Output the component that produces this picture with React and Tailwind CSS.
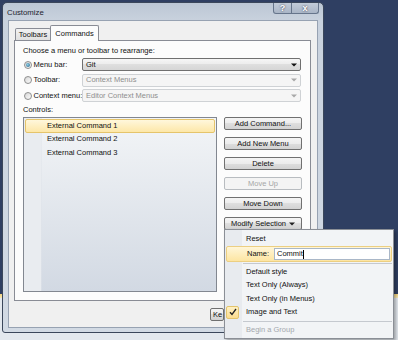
import React from 'react';

const btnBase =
  'h-[13px] flex items-center justify-center rounded-[2px] border';
const btnOn =
  'border-[#707070] bg-[linear-gradient(#f4f4f4_0%,#ececec_50%,#dedede_50%,#d2d2d2_100%)] text-[#111]';
const btnOff = 'border-[#b8bcc0] bg-[#f4f4f4] text-[#a6a6a6]';

const Button = ({ children, disabled, className = '' }) => (
  <div className={`${btnBase} ${disabled ? btnOff : btnOn} ${className}`}>{children}</div>
);

const Arrow = ({ color = '#000' }) => (
  <svg width="6" height="4" viewBox="0 0 6 4">
    <path d="M0 0.5 H6 L3 3.5 Z" fill={color} />
  </svg>
);

const Radio = ({ checked }) => (
  <div className="w-[8px] h-[8px] shrink-0 rounded-full border border-[#8e8f8f] bg-[linear-gradient(135deg,#d7d7d7,#fbfbfb)] flex items-center justify-center">
    {checked && (
      <div className="w-[4px] h-[4px] rounded-full bg-[radial-gradient(circle_at_40%_40%,#8fd0e6,#1f5c84)]" />
    )}
  </div>
);

const Select = ({ value, disabled }) => (
  <div
    className={`w-[219px] h-[13px] shrink-0 rounded-[2px] border flex items-center justify-between pl-[3px] pr-[3px] ${
      disabled
        ? 'border-[#cfd2d5] bg-[#f5f5f5] text-[#8e8e8e]'
        : 'border-[#707070] bg-[linear-gradient(#f6f6f6_0%,#ececec_50%,#dfdfdf_50%,#d6d6d6_100%)] text-[#111]'
    }`}
  >
    <span>{value}</span>
    <Arrow color={disabled ? '#a8a8a8' : '#111'} />
  </div>
);

const Row = ({ label, checked, value, disabled }) => (
  <div className="h-[13px] flex items-center pl-[9px]">
    <Radio checked={checked} />
    <span className="w-[50px] shrink-0 pl-[1.5px] whitespace-nowrap text-[#111]">{label}</span>
    <Select value={value} disabled={disabled} />
  </div>
);

const MenuItem = ({ children, disabled, checked, className = 'h-[13.5px]' }) => (
  <div className={`flex items-center ${className}`}>
    <div className="w-[18px] h-full flex items-center pl-[1px]">
      {checked && (
        <div className="w-[13px] h-[13px] rounded-[2px] border border-[#e3c46c] bg-[linear-gradient(#fff1c4,#fbdc8f)] flex items-center justify-center">
          <svg width="8" height="8" viewBox="0 0 8 8">
            <path d="M1 4.2 L3 6.5 L7 1" stroke="#222" strokeWidth="1.3" fill="none" />
          </svg>
        </div>
      )}
    </div>
    <span className={`pl-[3px] ${disabled ? 'text-[#a4a8ad]' : 'text-[#111]'}`}>{children}</span>
  </div>
);

const Separator = () => <div className="ml-[18px] mr-[1px] h-px bg-[#c5c9cf]" />;

export default function App() {
  return (
    <div className="relative w-[398px] h-[340px] overflow-hidden font-['Liberation_Sans',Arial,sans-serif] text-[7.5px] leading-[12px]">
      {/* desktop behind the dialog */}
      <div className="h-full flex flex-col">
        <div className="h-[294px] bg-[#2f3f62]" />
        <div className="h-[4px] bg-[linear-gradient(#f2d37c,#f7e7b4)]" />
        <div className="flex-1 bg-[#e3e8ee]" />
      </div>

      {/* dialog window */}
      <div className="absolute left-[2px] top-[2px] w-[322px] h-[331px] rounded-t-[5px] rounded-b-[3px] border border-[#3b475b] bg-[linear-gradient(#bcc7d5,#c9d2de_18px,#d2dae4)] flex flex-col">
        <div className="h-[17px] flex items-start justify-between">
          <span className="pl-[4px] pt-[4px] text-[7.8px] text-[#1e2430]">Customize</span>
          <div className="flex h-[11px] mr-[4px] rounded-b-[3px] border border-t-0 border-[#66758b] bg-[linear-gradient(#c2ccd9,#a9b5c6)] text-white font-bold text-[9px] leading-[10px] [text-shadow:0_0_2px_#223]">
            <div className="w-[18px] flex justify-center border-r border-[#66758b]">?</div>
            <div className="w-[26px] flex justify-center">x</div>
          </div>
        </div>

        <div className="mx-[5px] mb-[4px] flex-1 bg-[#f0f0f0] border border-[#97a2b2] flex flex-col pt-[4px] pl-[5px] pr-[6px]">
          {/* tabs */}
          <div className="h-[15px] flex items-end pl-[1px] relative z-10">
            <div className="w-[36px] h-[12px] border border-b-0 border-[#898c95] rounded-t-[2px] bg-[linear-gradient(#f2f2f2,#e0e0e0)] flex items-center justify-center text-[#111]">
              Toolbars
            </div>
            <div className="w-[49px] h-[16px] -mb-px -ml-px border border-b-0 border-[#898c95] rounded-t-[2px] bg-[#fcfcfc] flex items-center justify-center text-[#111]">
              Commands
            </div>
          </div>

          {/* tab panel */}
          <div className="h-[261px] border border-[#898c95] bg-[#fcfcfc] flex flex-col pt-[4px]">
            <div className="pl-[8px] h-[12px] text-[#111]">Choose a menu or toolbar to rearrange:</div>
            <div className="mt-[1px] flex flex-col gap-[2.5px]">
              <Row label="Menu bar:" checked value="Git" />
              <Row label="Toolbar:" value="Context Menus" disabled />
              <Row label="Context menu:" value="Editor Context Menus" disabled />
            </div>
            <div className="mt-[2px] pl-[8px] h-[12px] text-[#111]">Controls:</div>

            <div className="mt-[1px] pl-[8px] flex gap-[7px]">
              {/* list box */}
              <div className="w-[194px] h-[175px] border border-[#828790] bg-[linear-gradient(90deg,#e9ecf0_17px,#dfe3e9_17px,transparent_18px),linear-gradient(#f3f5f7,#d2d9e3)] pt-px flex flex-col">
                <div className="mx-px h-[13.5px] rounded-[2px] border border-[#e5c46b] bg-[linear-gradient(#fff7dc,#fde7a8)] flex items-center pl-[21px] text-[#111]">
                  External Command 1
                </div>
                <div className="mx-px h-[13.5px] flex items-center pl-[22px] text-[#111]">External Command 2</div>
                <div className="mx-px h-[13.5px] flex items-center pl-[22px] text-[#111]">External Command 3</div>
              </div>

              {/* buttons */}
              <div className="w-[78px] flex flex-col gap-[7px]">
                <Button>Add Command...</Button>
                <Button>Add New Menu</Button>
                <Button>Delete</Button>
                <Button disabled>Move Up</Button>
                <Button>Move Down</Button>
                <Button className="gap-[3px]">
                  Modify Selection <Arrow color="#222" />
                </Button>
              </div>
            </div>
          </div>

          {/* bottom buttons (mostly under the open menu) */}
          <div className="mt-[7px] flex pl-[196px]">
            <Button className="w-[14px] !justify-start pl-[2px] overflow-hidden whitespace-nowrap">Ke</Button>
          </div>
        </div>
      </div>

      {/* open drop-down menu */}
      <div className="absolute left-[224px] top-[229px] w-[170px] h-[110px] border border-[#8b8f96] bg-[linear-gradient(90deg,#e8ebef_17px,#f2f4f6_17px)] shadow-[2px_2px_3px_rgba(0,0,0,0.3)] flex flex-col pt-px">
        <MenuItem className="h-[15px]">Reset</MenuItem>
        <div className="mx-px h-[16px] rounded-[2px] border border-[#eccf82] bg-[linear-gradient(#fff6d8,#fde5a2)] flex items-center">
          <span className="w-[47px] pl-[20px] text-[#111]">Name:</span>
          <div className="flex-1 mr-px h-[12.5px] border border-[#a9b7c8] bg-white flex items-center pl-[2px] text-[#111]">
            Commit<span className="w-px h-[9px] bg-black" />
          </div>
        </div>
        <div className="py-[1px]">
          <Separator />
        </div>
        <MenuItem>Default style</MenuItem>
        <MenuItem>Text Only (Always)</MenuItem>
        <MenuItem>Text Only (in Menus)</MenuItem>
        <MenuItem checked>Image and Text</MenuItem>
        <div className="py-[1.5px]">
          <Separator />
        </div>
        <MenuItem disabled className="h-[14px]">Begin a Group</MenuItem>
      </div>
    </div>
  );
}
